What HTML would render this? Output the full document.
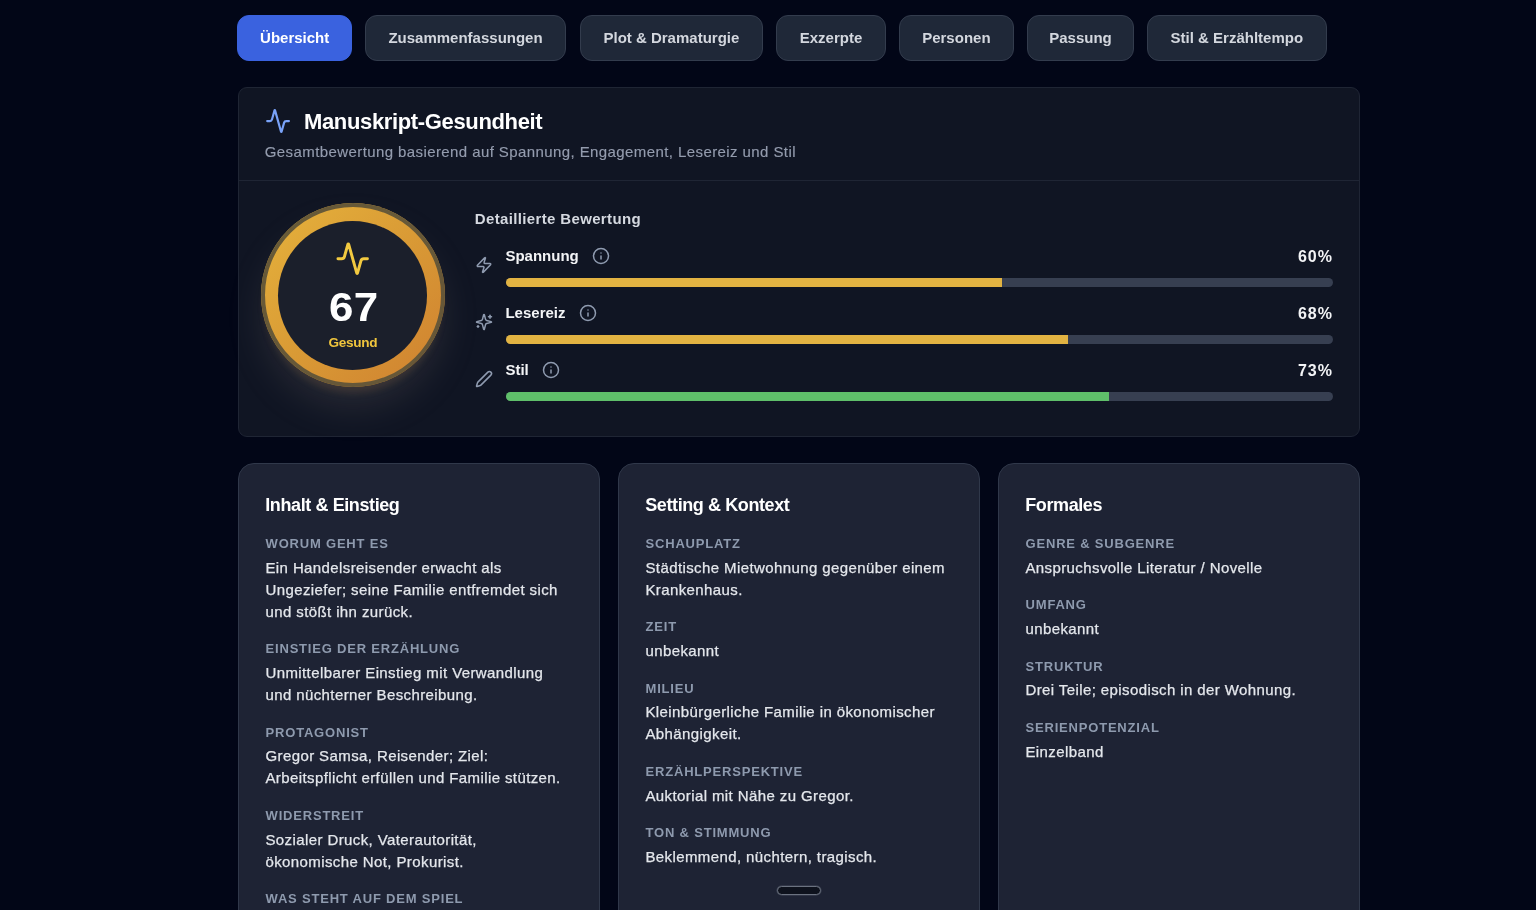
<!DOCTYPE html>
<html><head><meta charset="utf-8"><title>Manuskript</title><style>
*{margin:0;padding:0;box-sizing:border-box}
html,body{width:1536px;height:910px;overflow:hidden;background:#020617;font-family:"Liberation Sans", sans-serif}
#root{position:absolute;left:0;top:0;width:1536px;height:910px;will-change:transform}
.t{position:absolute;white-space:nowrap}
.ic{position:absolute;overflow:visible}
.tab{position:absolute;background:#1f2838;border:1px solid #333c4d;border-radius:12px;color:#d3d7de;font-size:15px;font-weight:700;
  display:flex;align-items:center;justify-content:center;line-height:18px}
.tab span{position:relative;top:0.5px}
.tab.act{background:#3a62df;border-color:#3a62df;color:#fff}
.card{position:absolute;background:#101523;border:1px solid #1f2534;border-radius:9px}
.divider{position:absolute;height:1px;background:#1f2534}
.ring{position:absolute;width:184px;height:184px;border-radius:50%;background:linear-gradient(135deg,#e6b33c 0%,#d99a35 50%,#cf8030 100%);
  box-shadow:inset 0 0 0 4px rgba(92,82,56,0.92)}
.halo{position:absolute;width:184px;height:184px;border-radius:50%;box-shadow:0 9px 6px -3px rgba(110,85,60,0.28),0 22px 44px -8px rgba(200,185,170,0.17)}
.inner{position:absolute;width:149px;height:149px;border-radius:50%;background:#1b1f2b}
.bar{position:absolute;height:8.5px;border-radius:5px;background:#373f51;overflow:hidden}
.bar div{height:100%}
.lcard{position:absolute;width:362px;height:500px;background:#1e2334;border:1px solid #30384a;border-radius:16px}
.pill{position:absolute;width:44px;height:9px;border-radius:5px;background:#0e121d;border:1px solid #6b7280;box-shadow:0 0 0 0.5px rgba(107,114,128,0.5)}
</style></head>
<body><div id="root">
<div class="tab act" style="left:237.3px;top:14.8px;width:114.70px;height:46.0px;"><span>Übersicht</span></div>
<div class="tab" style="left:365.2px;top:14.8px;width:200.70px;height:46.0px;"><span>Zusammenfassungen</span></div>
<div class="tab" style="left:579.6px;top:14.8px;width:183.60px;height:46.0px;"><span>Plot &amp; Dramaturgie</span></div>
<div class="tab" style="left:776.3px;top:14.8px;width:109.40px;height:46.0px;"><span>Exzerpte</span></div>
<div class="tab" style="left:899.0px;top:14.8px;width:114.75px;height:46.0px;"><span>Personen</span></div>
<div class="tab" style="left:1026.9px;top:14.8px;width:107.20px;height:46.0px;"><span>Passung</span></div>
<div class="tab" style="left:1147.0px;top:14.8px;width:179.70px;height:46.0px;"><span>Stil &amp; Erzähltempo</span></div>
<div class="card" style="left:237.5px;top:87.0px;width:1122.25px;height:349.60px;"></div>
<div class="divider" style="left:238.5px;top:180.1px;width:1120.25px;"></div>
<svg class="ic" style="left:264.80px;top:108.00px;width:26.1px;height:26.1px;" viewBox="0 0 24 24" fill="none" stroke="#79a2f8" stroke-width="2" stroke-linecap="round" stroke-linejoin="round"><path d="M22 12h-2.48a2 2 0 0 0-1.93 1.46l-2.35 8.36a.25.25 0 0 1-.48 0L9.24 2.18a.25.25 0 0 0-.48 0l-2.35 8.36A2 2 0 0 1 4.49 12H2"/></svg>
<div class="t" style="left:303.96px;top:107.73px;font-size:22px;line-height:27.5px;font-weight:700;color:#ffffff;letter-spacing:-0.35px;">Manuskript-Gesundheit</div>
<div class="t" style="left:264.75px;top:142.73px;font-size:15px;line-height:18.75px;font-weight:400;color:#949cae;letter-spacing:0.41px;-webkit-text-stroke:0.15px #949cae;">Gesamtbewertung basierend auf Spannung, Engagement, Lesereiz und Stil</div>
<div class="halo" style="left:260.6px;top:203.39999999999998px;"></div>
<div class="ring" style="left:260.6px;top:203.39999999999998px;"></div>
<div class="inner" style="left:278.1px;top:220.89999999999998px;"></div>
<svg class="ic" style="left:334.70px;top:240.55px;width:35.4px;height:35.4px;" viewBox="0 0 24 24" fill="none" stroke="#f2c940" stroke-width="2" stroke-linecap="round" stroke-linejoin="round"><path d="M22 12h-2.48a2 2 0 0 0-1.93 1.46l-2.35 8.36a.25.25 0 0 1-.48 0L9.24 2.18a.25.25 0 0 0-.48 0l-2.35 8.36A2 2 0 0 1 4.49 12H2"/></svg>
<div class="t" style="left:328.66px;top:282.07px;font-size:41px;line-height:51.25px;font-weight:700;color:#ffffff;letter-spacing:0.4px;transform:scaleX(1.07);transform-origin:0 0;">67</div>
<div class="t" style="left:328.62px;top:333.99px;font-size:13.6px;line-height:17.0px;font-weight:700;color:#f0c53d;letter-spacing:-0.35px;">Gesund</div>
<div class="t" style="left:474.85px;top:210.23px;font-size:15px;line-height:18.75px;font-weight:700;color:#d5d9e0;letter-spacing:0.35px;">Detaillierte Bewertung</div>
<svg class="ic" style="left:475.00px;top:256.00px;width:18px;height:18px;" viewBox="0 0 24 24" fill="none" stroke="#8f9bb0" stroke-width="2" stroke-linecap="round" stroke-linejoin="round"><path d="M4 14a1 1 0 0 1-.78-1.63l9.9-10.2a.5.5 0 0 1 .86.46l-1.92 6.02A1 1 0 0 0 13 10h7a1 1 0 0 1 .78 1.63l-9.9 10.2a.5.5 0 0 1-.86-.46l1.92-6.02A1 1 0 0 0 11 14z"/></svg>
<div class="t" style="left:505.45px;top:246.93px;font-size:15px;line-height:18.75px;font-weight:700;color:#f3f4f6;letter-spacing:0px;">Spannung</div>
<svg class="ic" style="left:591.80px;top:247.00px;width:18px;height:18px;" viewBox="0 0 24 24" fill="none" stroke="#8f9bb0" stroke-width="2" stroke-linecap="round" stroke-linejoin="round"><circle cx="12" cy="12" r="10"/><path d="M12 16v-4"/><path d="M12 8h.01"/></svg>
<div class="t" style="left:1298.06px;top:247.26px;font-size:16px;line-height:20.0px;font-weight:700;color:#f3f4f6;letter-spacing:0.9px;">60%</div>
<div class="bar" style="left:505.9px;top:278.20px;width:826.85px;"><div style="width:60%;background:#e2b342"></div></div>
<svg class="ic" style="left:475.00px;top:312.90px;width:18px;height:18px;" viewBox="0 0 24 24" fill="none" stroke="#8f9bb0" stroke-width="2" stroke-linecap="round" stroke-linejoin="round"><path d="M9.937 15.5A2 2 0 0 0 8.5 14.063l-6.135-1.582a.5.5 0 0 1 0-.962L8.5 9.936A2 2 0 0 0 9.937 8.5l1.582-6.135a.5.5 0 0 1 .963 0L14.063 8.5A2 2 0 0 0 15.5 9.937l6.135 1.581a.5.5 0 0 1 0 .964L15.5 14.063a2 2 0 0 0-1.437 1.437l-1.582 6.135a.5.5 0 0 1-.963 0z"/><path d="M20 3v4"/><path d="M22 5h-4"/><path d="M4 17v2"/><path d="M5 18H3"/></svg>
<div class="t" style="left:505.45px;top:303.83px;font-size:15px;line-height:18.75px;font-weight:700;color:#f3f4f6;letter-spacing:0px;">Lesereiz</div>
<svg class="ic" style="left:579.10px;top:303.90px;width:18px;height:18px;" viewBox="0 0 24 24" fill="none" stroke="#8f9bb0" stroke-width="2" stroke-linecap="round" stroke-linejoin="round"><circle cx="12" cy="12" r="10"/><path d="M12 16v-4"/><path d="M12 8h.01"/></svg>
<div class="t" style="left:1298.06px;top:304.16px;font-size:16px;line-height:20.0px;font-weight:700;color:#f3f4f6;letter-spacing:0.9px;">68%</div>
<div class="bar" style="left:505.9px;top:335.10px;width:826.85px;"><div style="width:68%;background:#e2b342"></div></div>
<svg class="ic" style="left:475.00px;top:369.80px;width:18px;height:18px;" viewBox="0 0 24 24" fill="none" stroke="#8f9bb0" stroke-width="2" stroke-linecap="round" stroke-linejoin="round"><path d="M21.174 6.812a1 1 0 0 0-3.986-3.987L3.842 16.174a2 2 0 0 0-.5.83l-1.321 4.352a.5.5 0 0 0 .623.622l4.353-1.32a2 2 0 0 0 .83-.497z"/></svg>
<div class="t" style="left:505.45px;top:360.73px;font-size:15px;line-height:18.75px;font-weight:700;color:#f3f4f6;letter-spacing:0px;">Stil</div>
<svg class="ic" style="left:541.85px;top:360.80px;width:18px;height:18px;" viewBox="0 0 24 24" fill="none" stroke="#8f9bb0" stroke-width="2" stroke-linecap="round" stroke-linejoin="round"><circle cx="12" cy="12" r="10"/><path d="M12 16v-4"/><path d="M12 8h.01"/></svg>
<div class="t" style="left:1298.06px;top:361.06px;font-size:16px;line-height:20.0px;font-weight:700;color:#f3f4f6;letter-spacing:0.9px;">73%</div>
<div class="bar" style="left:505.9px;top:392.00px;width:826.85px;"><div style="width:73%;background:#5fbf6a"></div></div>
<div class="lcard" style="left:237.5px;top:463.0px;"></div>
<div class="t" style="left:265.24px;top:493.61px;font-size:18px;line-height:22.5px;font-weight:700;color:#ffffff;letter-spacing:-0.4px;">Inhalt &amp; Einstieg</div>
<div class="t" style="left:265.59px;top:536.17px;font-size:13px;line-height:16.25px;font-weight:700;color:#8e9aae;letter-spacing:0.8px;">WORUM GEHT ES</div>
<div class="t" style="left:265.45px;top:558.63px;font-size:15px;line-height:18.75px;font-weight:400;color:#e4e7ec;letter-spacing:0.4px;-webkit-text-stroke:0.25px #e4e7ec;">Ein Handelsreisender erwacht als</div>
<div class="t" style="left:265.45px;top:580.63px;font-size:15px;line-height:18.75px;font-weight:400;color:#e4e7ec;letter-spacing:0.4px;-webkit-text-stroke:0.25px #e4e7ec;">Ungeziefer; seine Familie entfremdet sich</div>
<div class="t" style="left:265.45px;top:602.63px;font-size:15px;line-height:18.75px;font-weight:400;color:#e4e7ec;letter-spacing:0.4px;-webkit-text-stroke:0.25px #e4e7ec;">und stößt ihn zurück.</div>
<div class="t" style="left:265.59px;top:641.47px;font-size:13px;line-height:16.25px;font-weight:700;color:#8e9aae;letter-spacing:0.8px;">EINSTIEG DER ERZÄHLUNG</div>
<div class="t" style="left:265.45px;top:663.93px;font-size:15px;line-height:18.75px;font-weight:400;color:#e4e7ec;letter-spacing:0.4px;-webkit-text-stroke:0.25px #e4e7ec;">Unmittelbarer Einstieg mit Verwandlung</div>
<div class="t" style="left:265.45px;top:685.93px;font-size:15px;line-height:18.75px;font-weight:400;color:#e4e7ec;letter-spacing:0.4px;-webkit-text-stroke:0.25px #e4e7ec;">und nüchterner Beschreibung.</div>
<div class="t" style="left:265.59px;top:724.77px;font-size:13px;line-height:16.25px;font-weight:700;color:#8e9aae;letter-spacing:0.8px;">PROTAGONIST</div>
<div class="t" style="left:265.45px;top:747.23px;font-size:15px;line-height:18.75px;font-weight:400;color:#e4e7ec;letter-spacing:0.4px;-webkit-text-stroke:0.25px #e4e7ec;">Gregor Samsa, Reisender; Ziel:</div>
<div class="t" style="left:265.45px;top:769.23px;font-size:15px;line-height:18.75px;font-weight:400;color:#e4e7ec;letter-spacing:0.4px;-webkit-text-stroke:0.25px #e4e7ec;">Arbeitspflicht erfüllen und Familie stützen.</div>
<div class="t" style="left:265.59px;top:808.07px;font-size:13px;line-height:16.25px;font-weight:700;color:#8e9aae;letter-spacing:0.8px;">WIDERSTREIT</div>
<div class="t" style="left:265.45px;top:830.53px;font-size:15px;line-height:18.75px;font-weight:400;color:#e4e7ec;letter-spacing:0.4px;-webkit-text-stroke:0.25px #e4e7ec;">Sozialer Druck, Vaterautorität,</div>
<div class="t" style="left:265.45px;top:852.53px;font-size:15px;line-height:18.75px;font-weight:400;color:#e4e7ec;letter-spacing:0.4px;-webkit-text-stroke:0.25px #e4e7ec;">ökonomische Not, Prokurist.</div>
<div class="t" style="left:265.59px;top:891.37px;font-size:13px;line-height:16.25px;font-weight:700;color:#8e9aae;letter-spacing:0.8px;">WAS STEHT AUF DEM SPIEL</div>
<div class="lcard" style="left:617.5px;top:463.0px;"></div>
<div class="t" style="left:645.24px;top:493.61px;font-size:18px;line-height:22.5px;font-weight:700;color:#ffffff;letter-spacing:-0.4px;">Setting &amp; Kontext</div>
<div class="t" style="left:645.59px;top:536.17px;font-size:13px;line-height:16.25px;font-weight:700;color:#8e9aae;letter-spacing:0.8px;">SCHAUPLATZ</div>
<div class="t" style="left:645.45px;top:558.63px;font-size:15px;line-height:18.75px;font-weight:400;color:#e4e7ec;letter-spacing:0.4px;-webkit-text-stroke:0.25px #e4e7ec;">Städtische Mietwohnung gegenüber einem</div>
<div class="t" style="left:645.45px;top:580.63px;font-size:15px;line-height:18.75px;font-weight:400;color:#e4e7ec;letter-spacing:0.4px;-webkit-text-stroke:0.25px #e4e7ec;">Krankenhaus.</div>
<div class="t" style="left:645.59px;top:619.47px;font-size:13px;line-height:16.25px;font-weight:700;color:#8e9aae;letter-spacing:0.8px;">ZEIT</div>
<div class="t" style="left:645.45px;top:641.93px;font-size:15px;line-height:18.75px;font-weight:400;color:#e4e7ec;letter-spacing:0.4px;-webkit-text-stroke:0.25px #e4e7ec;">unbekannt</div>
<div class="t" style="left:645.59px;top:680.77px;font-size:13px;line-height:16.25px;font-weight:700;color:#8e9aae;letter-spacing:0.8px;">MILIEU</div>
<div class="t" style="left:645.45px;top:703.23px;font-size:15px;line-height:18.75px;font-weight:400;color:#e4e7ec;letter-spacing:0.4px;-webkit-text-stroke:0.25px #e4e7ec;">Kleinbürgerliche Familie in ökonomischer</div>
<div class="t" style="left:645.45px;top:725.23px;font-size:15px;line-height:18.75px;font-weight:400;color:#e4e7ec;letter-spacing:0.4px;-webkit-text-stroke:0.25px #e4e7ec;">Abhängigkeit.</div>
<div class="t" style="left:645.59px;top:764.07px;font-size:13px;line-height:16.25px;font-weight:700;color:#8e9aae;letter-spacing:0.8px;">ERZÄHLPERSPEKTIVE</div>
<div class="t" style="left:645.45px;top:786.53px;font-size:15px;line-height:18.75px;font-weight:400;color:#e4e7ec;letter-spacing:0.4px;-webkit-text-stroke:0.25px #e4e7ec;">Auktorial mit Nähe zu Gregor.</div>
<div class="t" style="left:645.59px;top:825.37px;font-size:13px;line-height:16.25px;font-weight:700;color:#8e9aae;letter-spacing:0.8px;">TON &amp; STIMMUNG</div>
<div class="t" style="left:645.45px;top:847.83px;font-size:15px;line-height:18.75px;font-weight:400;color:#e4e7ec;letter-spacing:0.4px;-webkit-text-stroke:0.25px #e4e7ec;">Beklemmend, nüchtern, tragisch.</div>
<div class="lcard" style="left:997.5px;top:463.0px;"></div>
<div class="t" style="left:1025.24px;top:493.61px;font-size:18px;line-height:22.5px;font-weight:700;color:#ffffff;letter-spacing:-0.4px;">Formales</div>
<div class="t" style="left:1025.59px;top:536.17px;font-size:13px;line-height:16.25px;font-weight:700;color:#8e9aae;letter-spacing:0.8px;">GENRE &amp; SUBGENRE</div>
<div class="t" style="left:1025.45px;top:558.63px;font-size:15px;line-height:18.75px;font-weight:400;color:#e4e7ec;letter-spacing:0.4px;-webkit-text-stroke:0.25px #e4e7ec;">Anspruchsvolle Literatur / Novelle</div>
<div class="t" style="left:1025.59px;top:597.47px;font-size:13px;line-height:16.25px;font-weight:700;color:#8e9aae;letter-spacing:0.8px;">UMFANG</div>
<div class="t" style="left:1025.45px;top:619.93px;font-size:15px;line-height:18.75px;font-weight:400;color:#e4e7ec;letter-spacing:0.4px;-webkit-text-stroke:0.25px #e4e7ec;">unbekannt</div>
<div class="t" style="left:1025.59px;top:658.77px;font-size:13px;line-height:16.25px;font-weight:700;color:#8e9aae;letter-spacing:0.8px;">STRUKTUR</div>
<div class="t" style="left:1025.45px;top:681.23px;font-size:15px;line-height:18.75px;font-weight:400;color:#e4e7ec;letter-spacing:0.4px;-webkit-text-stroke:0.25px #e4e7ec;">Drei Teile; episodisch in der Wohnung.</div>
<div class="t" style="left:1025.59px;top:720.07px;font-size:13px;line-height:16.25px;font-weight:700;color:#8e9aae;letter-spacing:0.8px;">SERIENPOTENZIAL</div>
<div class="t" style="left:1025.45px;top:742.53px;font-size:15px;line-height:18.75px;font-weight:400;color:#e4e7ec;letter-spacing:0.4px;-webkit-text-stroke:0.25px #e4e7ec;">Einzelband</div>
<div class="pill" style="left:776.7px;top:885.7px;"></div>
</div></body></html>
